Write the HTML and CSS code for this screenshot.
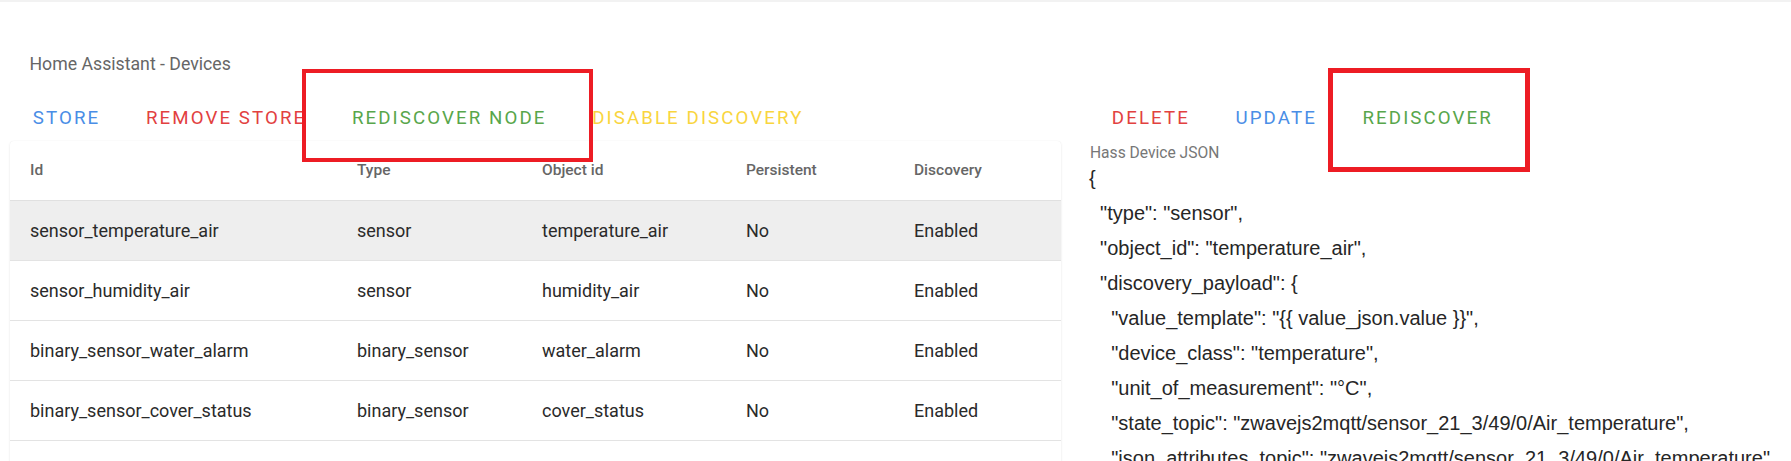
FILE: index.html
```html
<!DOCTYPE html>
<html lang="en">
<head>
<meta charset="utf-8">
<title>Home Assistant - Devices</title>
<link rel="stylesheet" href="styles.css">
</head>
<body>
<div class="topline"></div>
<main class="page">
  <h1 class="title">Home Assistant - Devices</h1>
  <div class="columns">
    <section class="left">
      <div class="actions">
        <button class="btn blue">Store</button>
        <button class="btn red">Remove store</button>
        <button class="btn green">Rediscover node</button>
        <button class="btn yellow">Disable discovery</button>
      </div>
      <div class="card">
        <table class="devices">
          <thead>
            <tr>
              <th class="c-id">Id</th>
              <th class="c-type">Type</th>
              <th class="c-obj">Object id</th>
              <th class="c-pers">Persistent</th>
              <th class="c-disc">Discovery</th>
            </tr>
          </thead>
          <tbody>
            <tr class="selected">
              <td>sensor_temperature_air</td><td>sensor</td><td>temperature_air</td><td>No</td><td>Enabled</td>
            </tr>
            <tr>
              <td>sensor_humidity_air</td><td>sensor</td><td>humidity_air</td><td>No</td><td>Enabled</td>
            </tr>
            <tr>
              <td>binary_sensor_water_alarm</td><td>binary_sensor</td><td>water_alarm</td><td>No</td><td>Enabled</td>
            </tr>
            <tr>
              <td>binary_sensor_cover_status</td><td>binary_sensor</td><td>cover_status</td><td>No</td><td>Enabled</td>
            </tr>
            <tr class="blank">
              <td>&nbsp;</td><td></td><td></td><td></td><td></td>
            </tr>
          </tbody>
        </table>
      </div>
    </section>
    <section class="right">
      <div class="actions">
        <button class="btn red">Delete</button>
        <button class="btn blue">Update</button>
        <button class="btn green">Rediscover</button>
      </div>
      <div class="json-label">Hass Device JSON</div>
      <div class="json">
        <div class="line">{</div>
        <div class="line">  "type": "sensor",</div>
        <div class="line">  "object_id": "temperature_air",</div>
        <div class="line">  "discovery_payload": {</div>
        <div class="line">    "value_template": "{{ value_json.value }}",</div>
        <div class="line">    "device_class": "temperature",</div>
        <div class="line">    "unit_of_measurement": "°C",</div>
        <div class="line">    "state_topic": "zwavejs2mqtt/sensor_21_3/49/0/Air_temperature",</div>
        <div class="line">    "json_attributes_topic": "zwavejs2mqtt/sensor_21_3/49/0/Air_temperature",</div>
        <div class="line">    "json_attributes_template": "{{ value_json | tojson }}"</div>
        <div class="line">  }</div>
        <div class="line">}</div>
      </div>
    </section>
  </div>
</main>
<div class="mark mark-node"></div>
<div class="mark mark-rediscover"></div>
</body>
</html>
```
FILE: styles.css
```css
html, body {
  margin: 0;
  padding: 0;
  background: #ffffff;
}

body {
  position: relative;
  font-family: Roboto, "Liberation Sans", sans-serif;
  color: #222222;
  overflow: hidden;
}

.topline {
  height: 2px;
  background: #f2f2f2;
}

.page {
  padding-left: 10px;
}

.title {
  margin: 52.4px 0 0;
  padding-left: 19.5px;
  font-size: 17.7px;
  font-weight: 400;
  line-height: 21px;
  color: #666666;
}

.columns {
  display: flex;
  gap: 28px;
  margin-top: 20.6px;
}

.left {
  flex: none;
  width: 1051px;
}

.right {
  flex: 1;
  min-width: 0;
}

.actions {
  display: flex;
  align-items: center;
  height: 44px;
}

.btn {
  display: block;
  margin: 0;
  padding: 0 22.8px;
  border: 0;
  background: none;
  font-family: inherit;
  font-size: 18.7px;
  font-weight: 400;
  line-height: 44px;
  letter-spacing: 2.1px;
  text-transform: uppercase;
  white-space: nowrap;
}

.blue { color: #4a8ee6; }
.red { color: #e2413f; }
.green { color: #58a64b; }
.yellow { color: #f9d53e; }

.card {
  margin-top: 1px;
  background: #ffffff;
  border-radius: 4px;
  box-shadow: 0 1px 3px rgba(0, 0, 0, 0.08), 0 0 1px rgba(0, 0, 0, 0.08);
  overflow: hidden;
}

.devices {
  width: 100%;
  border-collapse: separate;
  border-spacing: 0;
  table-layout: fixed;
}

.c-id { width: 327px; }
.c-type { width: 185px; }
.c-obj { width: 204px; }
.c-pers { width: 168px; }

.devices th,
.devices td {
  box-sizing: border-box;
  padding: 0 0 0 20px;
  text-align: left;
  white-space: nowrap;
}

.devices th {
  height: 60px;
  border-bottom: 1px solid #e0e0e0;
  font-size: 15.5px;
  font-weight: 500;
  color: #666666;
}

.devices td {
  height: 60px;
  border-bottom: 1px solid #e3e3e3;
  font-size: 18px;
  color: #2a2a2a;
}

.devices tr.selected td {
  background: #eeeeee;
}

.devices tr.blank td {
  border-bottom: 0;
}

.json-label {
  margin-top: 7.2px;
  padding-left: 1px;
  font-size: 15.6px;
  line-height: 13.4px;
  color: #777777;
}

.json {
  font-family: "Liberation Sans", Arial, sans-serif;
  font-size: 20px;
  line-height: 35px;
  color: #262626;
}

.json .line {
  white-space: pre;
}

.mark {
  position: absolute;
  box-sizing: border-box;
  border: 4.5px solid #ed1c24;
}

.mark-node {
  left: 302px;
  top: 69px;
  width: 291px;
  height: 93px;
}

.mark-rediscover {
  left: 1328px;
  top: 68px;
  width: 202px;
  height: 104px;
  border-width: 5px;
}
```
